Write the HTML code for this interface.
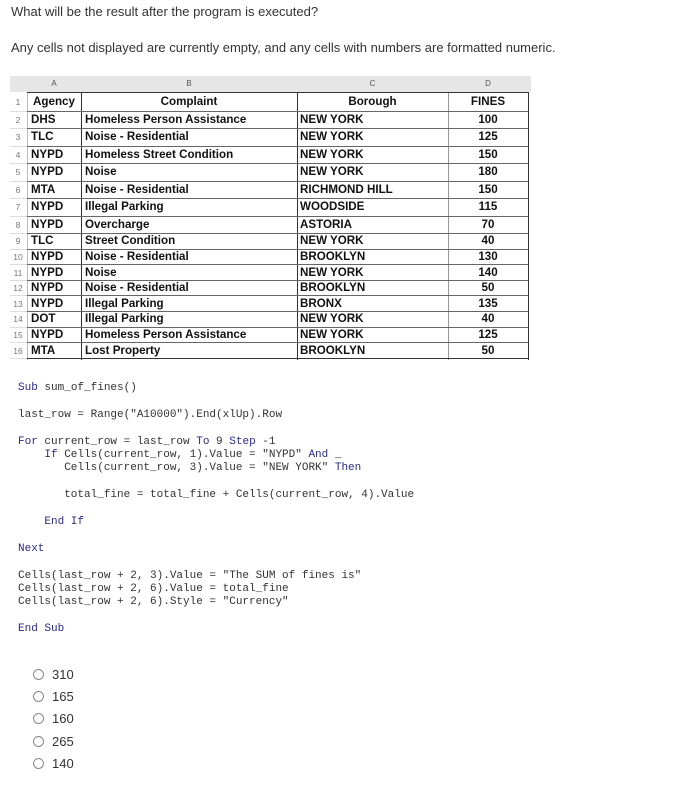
<!DOCTYPE html>
<html><head><meta charset="utf-8"><style>
body{margin:0;width:676px;height:785px;background:#fff;position:relative;overflow:hidden;font-family:"Liberation Sans",sans-serif;}
.t{position:absolute;left:11px;font-size:13px;color:#333;white-space:nowrap;}
.sheet{position:absolute;left:10px;top:76px;width:521px;height:284px;background:#fff;}
.hdr{position:absolute;left:0;top:0;width:521px;height:16px;background:#e6e6e6;}
.cl{position:absolute;top:3px;font-size:8px;color:#555;text-align:center;}
.c{position:absolute;font-weight:bold;font-size:11.6px;color:#111;white-space:nowrap;}
.hl{position:absolute;height:1px;background:#333;}
.vl{position:absolute;width:1px;background:#333;}
.code{position:absolute;left:18px;font-family:"Liberation Mono",monospace;font-size:11px;color:#333;white-space:pre;}
.k{color:#2a2a8a;}
.opt{position:absolute;left:33px;font-size:13px;color:#333;}
.opt span{display:inline-block;width:9px;height:9px;border:1px solid #888;border-radius:50%;margin-right:8px;vertical-align:-1px;}
</style></head><body>
<div class="t" style="top:4px">What will be the result after the program is executed?</div>
<div class="t" style="top:40px">Any cells not displayed are currently empty, and any cells with numbers are formatted numeric.</div>

<div class="sheet">
<div class="hdr"></div>
<div class="cl" style="left:17px;width:54px">A</div>
<div class="cl" style="left:71px;width:216px">B</div>
<div class="cl" style="left:287px;width:151px">C</div>
<div class="cl" style="left:438px;width:80px">D</div>
<div class="vl" style="left:17px;top:16px;height:268px;background:#bbb"></div>
<div class="vl" style="left:71px;top:16px;height:268px"></div>
<div class="vl" style="left:287px;top:16px;height:268px"></div>
<div class="vl" style="left:438px;top:16px;height:268px;background:#999"></div>
<div class="vl" style="left:518px;top:16px;height:268px"></div>
</div>

<div id="rows"></div>
<script>
var d=[["Agency","Complaint","Borough","FINES"],
["DHS","Homeless Person Assistance","NEW YORK","100"],
["TLC","Noise - Residential","NEW YORK","125"],
["NYPD","Homeless Street Condition","NEW YORK","150"],
["NYPD","Noise","NEW YORK","180"],
["MTA","Noise - Residential","RICHMOND HILL","150"],
["NYPD","Illegal Parking","WOODSIDE","115"],
["NYPD","Overcharge","ASTORIA","70"],
["TLC","Street Condition","NEW YORK","40"],
["NYPD","Noise - Residential","BROOKLYN","130"],
["NYPD","Noise","NEW YORK","140"],
["NYPD","Noise - Residential","BROOKLYN","50"],
["NYPD","Illegal Parking","BRONX","135"],
["DOT","Illegal Parking","NEW YORK","40"],
["NYPD","Homeless Person Assistance","NEW YORK","125"],
["MTA","Lost Property","BROOKLYN","50"]];
var h="",y=93;
for(var i=0;i<16;i++){var rh=i<8?17.5:15.6;var ty=y+(rh-13)/2;
h+='<div style="position:absolute;left:10px;top:'+(ty+2)+'px;width:16px;font-size:8.5px;color:#777;text-align:center">'+(i+1)+'</div>';
var r=d[i];
if(i==0){h+='<div class="c" style="left:27px;width:54px;text-align:center;top:'+ty+'px">'+r[0]+'</div><div class="c" style="left:81px;width:216px;text-align:center;top:'+ty+'px">'+r[1]+'</div><div class="c" style="left:297px;width:151px;text-align:center;top:'+ty+'px">'+r[2]+'</div>';}
else{h+='<div class="c" style="left:31px;top:'+ty+'px">'+r[0]+'</div><div class="c" style="left:85px;top:'+ty+'px">'+r[1]+'</div><div class="c" style="left:300px;top:'+ty+'px">'+r[2]+'</div>';}
h+='<div class="c" style="left:448px;width:80px;text-align:center;top:'+ty+'px">'+r[3]+'</div>';
y+=rh;
h+='<div class="hl" style="left:27px;width:501px;top:'+Math.round(y)+'px;background:'+(i==15?'#333':'#666')+'"></div><div class="hl" style="left:10px;width:17px;top:'+Math.round(y)+'px;background:#ddd"></div>';}
h+='<div class="hl" style="left:27px;width:501px;top:92px"></div>';
document.getElementById("rows").innerHTML=h;
</script>

<div class="code" style="top:382px"><span class="k">Sub</span> sum_of_fines()</div>
<div class="code" style="top:409px">last_row = Range("A10000").End(xlUp).Row</div>
<div class="code" style="top:436px"><span class="k">For</span> current_row = last_row <span class="k">To</span> 9 <span class="k">Step</span> -1</div>
<div class="code" style="top:449px">    <span class="k">If</span> Cells(current_row, 1).Value = "NYPD" <span class="k">And</span> _</div>
<div class="code" style="top:462px">       Cells(current_row, 3).Value = "NEW YORK" <span class="k">Then</span></div>
<div class="code" style="top:489px">       total_fine = total_fine + Cells(current_row, 4).Value</div>
<div class="code" style="top:516px">    <span class="k">End If</span></div>
<div class="code" style="top:543px"><span class="k">Next</span></div>
<div class="code" style="top:570px">Cells(last_row + 2, 3).Value = "The SUM of fines is"</div>
<div class="code" style="top:583px">Cells(last_row + 2, 6).Value = total_fine</div>
<div class="code" style="top:596px">Cells(last_row + 2, 6).Style = "Currency"</div>
<div class="code" style="top:623px"><span class="k">End Sub</span></div>

<div class="opt" style="top:667px"><span></span>310</div>
<div class="opt" style="top:689px"><span></span>165</div>
<div class="opt" style="top:711px"><span></span>160</div>
<div class="opt" style="top:734px"><span></span>265</div>
<div class="opt" style="top:756px"><span></span>140</div>
</body></html>
